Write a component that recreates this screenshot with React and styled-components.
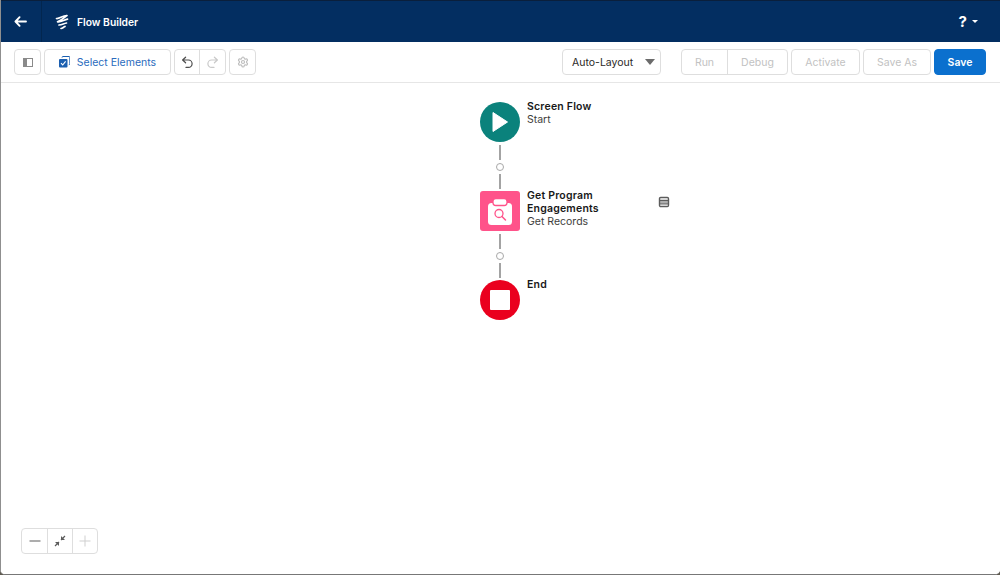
import React from "react";
import styled, { createGlobalStyle } from "styled-components";
import { Settings } from "lucide-react";

const Global = createGlobalStyle`
  html, body { margin: 0; padding: 0; height: 100%; background: #5f5a50; }
  #root { height: 100%; }
  * { box-sizing: border-box; }
`;

const Page = styled.div`
  width: 1000px;
  height: 575px;
  overflow: hidden;
  display: flex;
  flex-direction: column;
  font-family: Inter, "Noto Sans", sans-serif;
  background: #fff;
  border-left: 1px solid #8f8f8f;
  border-bottom: 1px solid #777;
  border-radius: 0 0 5px 5px;
  position: relative;
`;

const Header = styled.header`
  height: 42px;
  flex: none;
  background: #032e61;
  border-top: 1px solid #0a1f3c;
  display: flex;
  align-items: center;
  color: #fff;
`;

const BackCell = styled.div`
  width: 41px;
  height: 100%;
  display: flex;
  align-items: center;
  justify-content: center;
  border-right: 1px solid #02264f;
  padding-right: 1px;
`;

const BrandIcon = styled.svg`
  margin-left: 13px;
  width: 14px;
  height: 16px;
`;

const Title = styled.div`
  margin-left: 8px;
  font-size: 10.3px;
  font-weight: 600;
`;

const HelpArea = styled.div`
  margin-left: auto;
  margin-right: 21px;
  display: flex;
  align-items: center;
  gap: 5px;
  font-size: 15px;
  font-weight: 700;
  padding-right: 1px;
`;

const Caret = styled.span`
  width: 0;
  height: 0;
  border-left: 3px solid transparent;
  border-right: 3px solid transparent;
  border-top: 3px solid #fff;
`;

const Toolbar = styled.div`
  height: 41px;
  flex: none;
  background: #fff;
  border-bottom: 1px solid #e6e6e6;
  display: flex;
  align-items: center;
  padding: 0 14px 1px 13px;
`;

const Btn = styled.button`
  height: 26px;
  width: ${(p) => p.$w}px;
  margin-left: ${(p) => p.$ml || 0}px;
  padding: 1px 0 0;
  background: ${(p) => (p.$brand ? "#0b70ce" : "#fff")};
  color: ${(p) => (p.$brand ? "#fff" : p.$disabled ? "#c2c2c2" : "#2a6bbd")};
  border: 1px solid ${(p) => (p.$brand ? "#0b70ce" : "#dedede")};
  border-radius: 4px;
  font-family: inherit;
  font-size: 10.5px;
  font-weight: ${(p) => (p.$brand ? 600 : 400)};
  display: flex;
  align-items: center;
  justify-content: center;
  gap: 7px;
`;

const Group = styled.div`
  display: flex;
  margin-left: ${(p) => p.$ml || 0}px;
  height: 26px;
  border: 1px solid #dedede;
  border-radius: 4px;
`;

const GroupBtn = styled.div`
  width: ${(p) => p.$w}px;
  padding-top: 1px;
  display: flex;
  align-items: center;
  justify-content: center;
  font-size: 10.5px;
  color: #c2c2c2;
  & + & {
    border-left: 1px solid #dedede;
  }
`;

const Select = styled.div`
  width: 99px;
  height: 26px;
  margin-left: auto;
  padding: 1px 5px 0 9px;
  border: 1px solid #dedede;
  border-radius: 4px;
  display: flex;
  align-items: center;
  justify-content: space-between;
  font-size: 10.5px;
  color: #2b2826;
`;

const SelectArrow = styled.span`
  width: 0;
  height: 0;
  border-left: 5px solid transparent;
  border-right: 5px solid transparent;
  border-top: 6px solid #6b6b6b;
`;

const Canvas = styled.main`
  flex: 1;
  position: relative;
  background: #fff;
`;

const Flow = styled.div`
  position: absolute;
  left: 479px;
  top: 19px;
  width: 200px;
  display: flex;
  flex-direction: column;
`;

const Node = styled.div`
  display: flex;
  gap: 7px;
  height: 40px;
  position: relative;
`;

const Badge = styled.div`
  width: 40px;
  height: 40px;
  flex: none;
  display: flex;
  align-items: center;
  justify-content: center;
  background: ${(p) => p.$bg};
  border-radius: ${(p) => (p.$round ? "50%" : "3px")};
`;

const Labels = styled.div`
  font-size: 10.5px;
  line-height: 13px;
  color: #2b2826;
  width: 90px;
  margin-top: -2px;
`;

const NodeName = styled.div`
  font-weight: 600;
  color: #181818;
  letter-spacing: 0.2px;
`;

const NodeType = styled.div`
  color: #3e3e3c;
`;

const NodeNote = styled.svg`
  position: absolute;
  left: 178px;
  top: 5px;
  width: 12px;
  height: 12px;
`;

const Connector = styled.div`
  width: 40px;
  height: 49px;
  display: flex;
  flex-direction: column;
  align-items: center;
  justify-content: center;
`;

const Line = styled.div`
  width: 1.5px;
  height: 15px;
  background: #a3a3a3;
`;

const Dot = styled.div`
  width: 8px;
  height: 8px;
  margin: 3px 0;
  border-radius: 50%;
  border: 1px solid #a8a8a8;
  background: #fff;
`;

const Zoom = styled.div`
  position: absolute;
  left: 20px;
  bottom: 20px;
  display: flex;
  height: 26px;
  border: 1px solid #dedede;
  border-radius: 4px;
  background: #fff;
`;

const ZoomBtn = styled.div`
  width: 25px;
  display: flex;
  align-items: center;
  justify-content: center;
  & + & {
    border-left: 1px solid #dedede;
  }
`;

const FlowNode = ({ name, type, bg, round, children, note }) => (
  <Node>
    <Badge $bg={bg} $round={round}>{children}</Badge>
    <Labels>
      <NodeName>{name}</NodeName>
      {type && <NodeType>{type}</NodeType>}
    </Labels>
    {note && (
      <NodeNote viewBox="0 0 12 12">
        <rect x="1.5" y="1.5" width="9" height="9" rx="1.2" fill="none" stroke="#5c5c5c" strokeWidth="1.4" />
        <path d="M1.5 4.4h9M1.5 6h9M1.5 7.8h9" stroke="#5c5c5c" strokeWidth="1.2" />
      </NodeNote>
    )}
  </Node>
);

const Link = () => (
  <Connector>
    <Line />
    <Dot />
    <Line />
  </Connector>
);

export default function App() {
  return (
    <Page>
      <Global />
      <Header>
        <BackCell>
          <svg width="13" height="11" viewBox="0 0 14 12">
            <path d="M6 1.2 1.5 6 6 10.8M1.8 6H13" fill="none" stroke="#fff" strokeWidth="2" strokeLinecap="round" strokeLinejoin="round" />
          </svg>
        </BackCell>
        <BrandIcon viewBox="0 0 14 16">
          <path d="M1.500 4.500C4.500 5 7 1.800 12 1.500C9 3.500 7 6 2.500 7.800C6 8.500 9 5.800 12.500 5.200M4 11C7 11 8.500 9.500 11.500 9M6 14.500c1.500-.2 2.600-1.500 4-2" fill="none" stroke="#fff" strokeWidth="1.700" strokeLinecap="round" strokeLinejoin="round" />
        </BrandIcon>
        <Title>Flow Builder</Title>
        <HelpArea>
          ?<Caret />
        </HelpArea>
      </Header>
      <Toolbar>
        <Btn $w={27}>
          <svg width="10" height="9" viewBox="0 0 10 9">
            <rect x=".5" y=".5" width="9" height="8" fill="#fff" stroke="#8a8a8a" />
            <rect x=".5" y=".5" width="3.500" height="8" fill="#8a8a8a" />
          </svg>
        </Btn>
        <Btn $w={127} $ml={3}>
          <svg width="11" height="12" viewBox="0 0 11 12">
            <path d="M3 1.500a1 1 0 0 1 1-1h6a.8.8 0 0 1 .8.8v6.500a1 1 0 0 1-1 1" fill="none" stroke="#1b5fb0" strokeWidth="1" />
            <rect x="0" y="3" width="8.500" height="8.500" rx="1" fill="#1b5fb0" />
            <path d="M2 7.200 3.700 9 6.600 5.400" fill="none" stroke="#fff" strokeWidth="1.100" />
          </svg>
          Select Elements
        </Btn>
        <Group $ml={3}>
          <GroupBtn $w={24}>
            <svg width="13" height="13" viewBox="0 0 13 13">
              <path d="M4.600 1.200 1.600 4l3 2.800M2 4h5.400a3.700 3.700 0 0 1 0 7.400H5" fill="none" stroke="#4d4d4d" strokeWidth="1.200" strokeLinecap="round" strokeLinejoin="round" />
            </svg>
          </GroupBtn>
          <GroupBtn $w={26}>
            <svg width="13" height="13" viewBox="0 0 13 13">
              <path d="M8.400 1.200 11.400 4l-3 2.800M11 4H5.600a3.700 3.700 0 0 0 0 7.400H8" fill="none" stroke="#c9c9c9" strokeWidth="1.200" strokeLinecap="round" strokeLinejoin="round" />
            </svg>
          </GroupBtn>
        </Group>
        <Btn $w={27} $ml={3}>
          <Settings size={12} color="#bdbdbd" strokeWidth={2.4} />
        </Btn>
        <Select>
          Auto-Layout
          <SelectArrow />
        </Select>
        <Group $ml={20}>
          <GroupBtn $w={45}>Run</GroupBtn>
          <GroupBtn $w={60}>Debug</GroupBtn>
        </Group>
        <Btn $w={69} $ml={3} $disabled>Activate</Btn>
        <Btn $w={68} $ml={3} $disabled>Save As</Btn>
        <Btn $w={52} $ml={3} $brand>Save</Btn>
      </Toolbar>
      <Canvas>
        <Flow>
          <FlowNode name="Screen Flow" type="Start" bg="#0b827c" round>
            <svg width="18" height="22" viewBox="0 0 18 22">
              <path d="M2 1.500v19L16.500 11z" fill="#fff" stroke="#fff" strokeLinejoin="round" />
            </svg>
          </FlowNode>
          <Link />
          <FlowNode name="Get Program Engagements" type="Get Records" bg="#ff538a" note>
            <svg width="24" height="27" viewBox="0 0 24 27">
              <rect x="0" y="5" width="24" height="22" rx="3.500" fill="#fff" />
              <rect x="5" y="0.500" width="14" height="7" rx="2.800" fill="#fff" stroke="#ff538a" strokeWidth="1.300" />
              <circle cx="11" cy="15.500" r="4" fill="none" stroke="#ff538a" strokeWidth="1.300" />
              <path d="M14 18.500l3.500 3.500" stroke="#ff538a" strokeWidth="1.500" strokeLinecap="round" />
            </svg>
          </FlowNode>
          <Link />
          <FlowNode name="End" bg="#ea001e" round>
            <svg width="20" height="20" viewBox="0 0 20 20">
              <rect x="0" y="0" width="20" height="20" rx="1" fill="#fff" />
            </svg>
          </FlowNode>
        </Flow>
        <Zoom>
          <ZoomBtn>
            <svg width="12" height="12" viewBox="0 0 12 12"><path d="M.5 6h11" stroke="#5c5c5c" strokeWidth="1.200" /></svg>
          </ZoomBtn>
          <ZoomBtn>
            <svg width="12" height="12" viewBox="0 0 12 12">
              <path d="M7 1v4h4z M5 11V7H1z" fill="#5c5c5c" />
              <path d="M7 5l4-4M5 7l-4 4" stroke="#5c5c5c" strokeWidth="1.200" />
            </svg>
          </ZoomBtn>
          <ZoomBtn>
            <svg width="12" height="12" viewBox="0 0 12 12"><path d="M.5 6h11M6 .5v11" stroke="#cfcfcf" strokeWidth="1" /></svg>
          </ZoomBtn>
        </Zoom>
      </Canvas>
    </Page>
  );
}
